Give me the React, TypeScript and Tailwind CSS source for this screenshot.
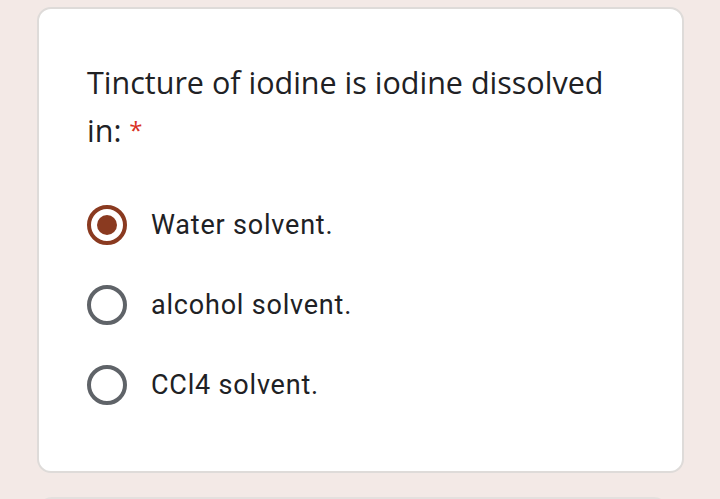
import React from "react";

const options = [
  { label: "Water solvent.", checked: true },
  { label: "alcohol solvent.", checked: false },
  { label: "CCl4 solvent.", checked: false },
];

function Radio({ checked }: { checked: boolean }) {
  return (
    <div
      className={`w-10 h-10 shrink-0 rounded-full border-[4px] flex items-center justify-center ${
        checked ? "border-[#8a3a20]" : "border-[#5f6368]"
      }`}
    >
      {checked && <div className="w-5 h-5 rounded-full bg-[#8a3a20]" />}
    </div>
  );
}

export default function App() {
  return (
    <div className="w-[720px] h-[499px] overflow-hidden bg-[#f3e9e6] pt-[7px] pl-[37px]">
      <div className="w-[647px] h-[466px] bg-white rounded-[14px] border-2 border-[#dedbd9] pl-[48px] pt-[49px]">
        <div
          className="text-[30.5px] leading-[48px] text-[#202124]"
          style={{ fontFamily: '"Open Sans", sans-serif' }}
        >
          Tincture of iodine is iodine dissolved
          <br />
          in: <span className="text-[#d93025] text-[24px] align-top">*</span>
        </div>
        <div className="mt-[51px] flex flex-col gap-[40px]" style={{ fontFamily: 'Roboto, sans-serif' }}>
          {options.map((o) => (
            <div key={o.label} className="flex items-center gap-[24px] h-10">
              <Radio checked={o.checked} />
              <span className="text-[27px] text-[#202124] tracking-[0.8px]">{o.label}</span>
            </div>
          ))}
        </div>
      </div>
      <div className="mt-[24px] w-[630px] ml-[1px] h-4 rounded-t-[14px] border-t-2 border-[#e4e0de] bg-white" />
    </div>
  );
}
